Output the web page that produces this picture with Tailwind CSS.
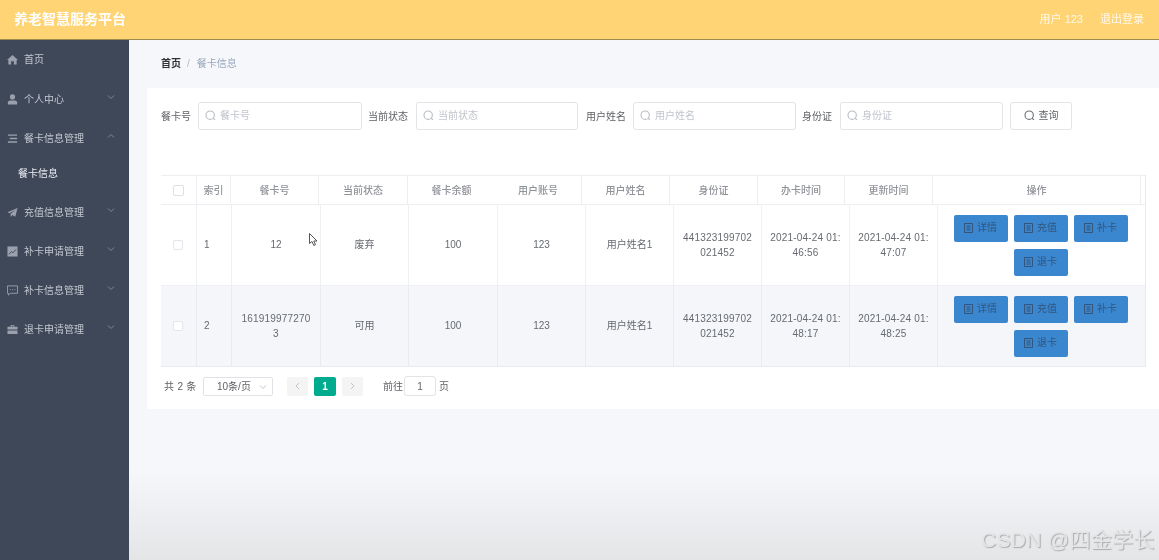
<!DOCTYPE html>
<html lang="zh">
<head>
  <meta charset="UTF-8">
  <title>养老智慧服务平台</title>
  <script src="https://cdn.jsdelivr.net/npm/@tailwindcss/browser@4"></script>
</head>
<body class="overflow-hidden">
<div class="relative w-[1159px] h-[560px] overflow-hidden bg-[#f5f7fa] text-[10px] text-[#666a70] font-['Liberation_Sans','Noto_Sans_CJK_SC',sans-serif] blur-[0.45px]">

  <!-- top bar -->
  <header class="h-[40px] bg-[#ffd475] border-b border-[#a08a50] flex items-center justify-between pl-[14px] pr-[15px] text-white">
    <div class="text-[14px] font-bold">养老智慧服务平台</div>
    <div class="flex gap-[17px] text-[11px] text-white/85">
      <span>用户 123</span>
      <span>退出登录</span>
    </div>
  </header>

  <div class="flex h-[520px]">
    <!-- sidebar -->
    <aside class="w-[129px] shrink-0 bg-[#3f4859] text-[#c3c8d0]">
      <div class="h-[39px] flex items-center pl-[7px] gap-[6px]">
        <svg class="w-[11px] h-[11px]" viewBox="0 0 12 12" fill="#9aa1ac"><path d="M6 1 L12 6.5 H10.5 V11.5 H7.5 V8 H4.5 V11.5 H1.5 V6.5 H0 Z"/></svg>
        <span>首页</span>
      </div>
      <div class="mt-px h-[39px] flex items-center pl-[7px] gap-[6px] relative">
        <svg class="w-[11px] h-[11px]" viewBox="0 0 12 12" fill="#9aa1ac"><circle cx="6" cy="3.2" r="2.8"/><path d="M1 11.5 V9 Q1 7 3.5 7 H8.5 Q11 7 11 9 V11.5 Z"/></svg>
        <span>个人中心</span>
        <svg class="absolute left-[107px] top-[14px] w-[8px] h-[6px]" viewBox="0 0 8 6" fill="none" stroke="#7f8794"><path d="M1 1.5 L4 4.5 L7 1.5"/></svg>
      </div>
      <div class="h-[39px] flex items-center pl-[7px] gap-[6px] relative">
        <svg class="w-[11px] h-[11px]" viewBox="0 0 12 12" fill="#9aa1ac"><path d="M1 1.5 H11 V2.9 H1 Z M3 5.3 H11 V6.7 H3 Z M1 9.1 H11 V10.5 H1 Z"/></svg>
        <span>餐卡信息管理</span>
        <svg class="absolute left-[107px] top-[14px] w-[8px] h-[6px]" viewBox="0 0 8 6" fill="none" stroke="#7f8794"><path d="M1 4.5 L4 1.5 L7 4.5"/></svg>
      </div>
      <div class="h-[35px] pb-[4px] flex items-center pl-[18px] text-[#eceef1]">餐卡信息</div>
      <div class="h-[39px] flex items-center pl-[7px] gap-[6px] relative">
        <svg class="w-[11px] h-[11px]" viewBox="0 0 12 12" fill="#9aa1ac"><path d="M11.5 1 L9 10.5 L5.8 8.6 L4.2 10.8 L3.8 7.6 L9.5 3 L2.8 6.8 L0.5 5.6 Z"/></svg>
        <span>充值信息管理</span>
        <svg class="absolute left-[107px] top-[14px] w-[8px] h-[6px]" viewBox="0 0 8 6" fill="none" stroke="#7f8794"><path d="M1 1.5 L4 4.5 L7 1.5"/></svg>
      </div>
      <div class="h-[39px] flex items-center pl-[7px] gap-[6px] relative">
        <svg class="w-[11px] h-[11px]" viewBox="0 0 12 12"><rect x="0.5" y="0.5" width="11" height="11" fill="#9aa1ac"/><path d="M2 9 L5 6 L6.5 7.5 L10 3.5" fill="none" stroke="#3f4859"/></svg>
        <span>补卡申请管理</span>
        <svg class="absolute left-[107px] top-[14px] w-[8px] h-[6px]" viewBox="0 0 8 6" fill="none" stroke="#7f8794"><path d="M1 1.5 L4 4.5 L7 1.5"/></svg>
      </div>
      <div class="h-[39px] flex items-center pl-[7px] gap-[6px] relative">
        <svg class="w-[11px] h-[11px]" viewBox="0 0 12 12" fill="none" stroke="#9aa1ac"><path d="M0.5 1 H11.5 V9 H4 L1.5 11 V9 H0.5 Z"/><path d="M3 5 H4 M5.5 5 H6.5 M8 5 H9"/></svg>
        <span>补卡信息管理</span>
        <svg class="absolute left-[107px] top-[14px] w-[8px] h-[6px]" viewBox="0 0 8 6" fill="none" stroke="#7f8794"><path d="M1 1.5 L4 4.5 L7 1.5"/></svg>
      </div>
      <div class="h-[39px] flex items-center pl-[7px] gap-[6px] relative">
        <svg class="w-[11px] h-[11px]" viewBox="0 0 12 12" fill="#9aa1ac"><path d="M4 1 H8 V3 H11.5 V6 H0.5 V3 H4 Z M5 2 V3 H7 V2 Z M0.5 7 H11.5 V11 H0.5 Z"/></svg>
        <span>退卡申请管理</span>
        <svg class="absolute left-[107px] top-[14px] w-[8px] h-[6px]" viewBox="0 0 8 6" fill="none" stroke="#7f8794"><path d="M1 1.5 L4 4.5 L7 1.5"/></svg>
      </div>
    </aside>

    <!-- main -->
    <main class="flex-1 pl-[18px]">
      <!-- breadcrumb -->
      <div class="h-[48px] flex items-center pl-[14px] pb-[1px]">
        <span class="text-[#303133] font-bold">首页</span>
        <span class="text-[#b4bcc8] ml-[6px] mr-[7px]">/</span>
        <span class="text-[#97a8be]">餐卡信息</span>
      </div>

      <section class="bg-white h-[321px] pl-[14px] pt-[14px]">
        <!-- search -->
        <div class="flex items-center h-[28px] text-[#606266]">
          <span class="w-[37px]">餐卡号</span>
          <div class="w-[164px] h-[28px] pb-px border border-[#e2e4e8] rounded-[3px] flex items-center pl-[6px] gap-[4px] text-[#c0c4cc]">
            <svg class="w-[11px] h-[11px]" viewBox="0 0 10 10" fill="none" stroke="#b9bdc5"><circle cx="4.7" cy="4.7" r="3.8"/><path d="M7.5 7.5 L9 9"/></svg>餐卡号
          </div>
          <span class="w-[48px] pl-[6px] shrink-0">当前状态</span>
          <div class="w-[162px] ml-[6px] h-[28px] pb-px border border-[#e2e4e8] rounded-[3px] flex items-center pl-[6px] gap-[4px] text-[#c0c4cc]">
            <svg class="w-[11px] h-[11px]" viewBox="0 0 10 10" fill="none" stroke="#b9bdc5"><circle cx="4.7" cy="4.7" r="3.8"/><path d="M7.5 7.5 L9 9"/></svg>当前状态
          </div>
          <span class="ml-[8px] w-[47px] shrink-0">用户姓名</span>
          <div class="w-[163px] h-[28px] pb-px border border-[#e2e4e8] rounded-[3px] flex items-center pl-[6px] gap-[4px] text-[#c0c4cc]">
            <svg class="w-[11px] h-[11px]" viewBox="0 0 10 10" fill="none" stroke="#b9bdc5"><circle cx="4.7" cy="4.7" r="3.8"/><path d="M7.5 7.5 L9 9"/></svg>用户姓名
          </div>
          <span class="ml-[6px] w-[38px] shrink-0">身份证</span>
          <div class="w-[163px] h-[28px] pb-px border border-[#e2e4e8] rounded-[3px] flex items-center pl-[6px] gap-[4px] text-[#c0c4cc]">
            <svg class="w-[11px] h-[11px]" viewBox="0 0 10 10" fill="none" stroke="#b9bdc5"><circle cx="4.7" cy="4.7" r="3.8"/><path d="M7.5 7.5 L9 9"/></svg>身份证
          </div>
          <button class="ml-[7px] w-[62px] h-[28px] pb-px border border-[#e2e4e8] rounded-[3px] flex items-center justify-center gap-[4px] text-[#606266] bg-white">
            <svg class="w-[11px] h-[11px]" viewBox="0 0 10 10" fill="none" stroke="#6a6f76"><circle cx="4.7" cy="4.7" r="3.8"/><path d="M7.5 7.5 L9 9"/></svg>查询
          </button>
        </div>

        <!-- table -->
        <div class="mt-[45px] w-[985px] border-b border-[#e8eaee] border-r border-r-[#e8eaee]">
          <div class="h-[30px] border-t border-b border-[#eceef2] flex text-[#909399] font-medium">
            <div class="w-[36px] border-r border-[#eceef2] flex items-center justify-center"><span class="block w-[11px] h-[11px] border border-[#dcdfe6] rounded-[2px] bg-white"></span></div>
            <div class="w-[34px] border-r border-[#eceef2] flex items-center justify-center">索引</div>
            <div class="w-[88px] border-r border-[#eceef2] flex items-center justify-center">餐卡号</div>
            <div class="w-[89px] border-r border-[#eceef2] flex items-center justify-center">当前状态</div>
            <div class="w-[87px] flex items-center justify-center">餐卡余额</div>
            <div class="w-[87px] border-r border-[#eceef2] flex items-center justify-center">用户账号</div>
            <div class="w-[88px] border-r border-[#eceef2] flex items-center justify-center">用户姓名</div>
            <div class="w-[88px] border-r border-[#eceef2] flex items-center justify-center">身份证</div>
            <div class="w-[87px] border-r border-[#eceef2] flex items-center justify-center">办卡时间</div>
            <div class="w-[88px] border-r border-[#eceef2] flex items-center justify-center">更新时间</div>
            <div class="w-[208px] border-r border-[#eceef2] flex items-center justify-center">操作</div>
          </div>

          <div class="h-[81px] flex border-b border-[#eef0f4] bg-white text-center leading-[15.5px]">
            <div class="w-[36px] border-r border-[#eef0f4] flex items-center justify-center pr-[2px]"><span class="block w-[10px] h-[10px] border border-[#e4e6eb] rounded-[2px] bg-white"></span></div>
            <div class="w-[35px] border-r border-[#eef0f4] flex items-center pl-[7px]">1</div>
            <div class="w-[89px] border-r border-[#eef0f4] flex items-center justify-center">12</div>
            <div class="w-[88px] border-r border-[#eef0f4] flex items-center justify-center">废弃</div>
            <div class="w-[89px] border-r border-[#eef0f4] flex items-center justify-center">100</div>
            <div class="w-[88px] border-r border-[#eef0f4] flex items-center justify-center">123</div>
            <div class="w-[88px] border-r border-[#eef0f4] flex items-center justify-center">用户姓名1</div>
            <div class="w-[88px] border-r border-[#eef0f4] flex items-center justify-center tracking-[0.2px]">441323199702<br>021452</div>
            <div class="w-[88px] border-r border-[#eef0f4] flex items-center justify-center tracking-[0.2px]">2021-04-24 01:<br>46:56</div>
            <div class="w-[88px] border-r border-[#eef0f4] flex items-center justify-center tracking-[0.2px]">2021-04-24 01:<br>47:07</div>
            <div class="flex-1 flex flex-wrap content-center justify-center gap-x-[6px] gap-y-[7px] pl-[15px] pr-[17px]">
              <button class="w-[54px] h-[27px] bg-[#3a87cf] rounded-[2px] flex items-center justify-center gap-[4px] text-[#33557c]"><svg class="w-[9px] h-[10px]" viewBox="0 0 9 10" fill="none" stroke="#33557c"><path d="M0.5 0.5 H8.5 V9.5 H0.5 Z M2.5 3 H6.5 M2.5 5 H6.5 M2.5 7 H6.5"/></svg>详情</button>
              <button class="w-[54px] h-[27px] bg-[#3a87cf] rounded-[2px] flex items-center justify-center gap-[4px] text-[#33557c]"><svg class="w-[9px] h-[10px]" viewBox="0 0 9 10" fill="none" stroke="#33557c"><path d="M0.5 0.5 H8.5 V9.5 H0.5 Z M2.5 3 H6.5 M2.5 5 H6.5 M2.5 7 H6.5"/></svg>充值</button>
              <button class="w-[54px] h-[27px] bg-[#3a87cf] rounded-[2px] flex items-center justify-center gap-[4px] text-[#33557c]"><svg class="w-[9px] h-[10px]" viewBox="0 0 9 10" fill="none" stroke="#33557c"><path d="M0.5 0.5 H8.5 V9.5 H0.5 Z M2.5 3 H6.5 M2.5 5 H6.5 M2.5 7 H6.5"/></svg>补卡</button>
              <button class="w-[54px] h-[27px] bg-[#3a87cf] rounded-[2px] flex items-center justify-center gap-[4px] text-[#33557c]"><svg class="w-[9px] h-[10px]" viewBox="0 0 9 10" fill="none" stroke="#33557c"><path d="M0.5 0.5 H8.5 V9.5 H0.5 Z M2.5 3 H6.5 M2.5 5 H6.5 M2.5 7 H6.5"/></svg>退卡</button>
            </div>
          </div>

          <div class="h-[80px] flex bg-[#f4f6fa] text-center leading-[15.5px]">
            <div class="w-[36px] border-r border-[#e9ebf0] flex items-center justify-center pr-[2px]"><span class="block w-[10px] h-[10px] border border-[#e4e6eb] rounded-[2px] bg-white"></span></div>
            <div class="w-[35px] border-r border-[#e9ebf0] flex items-center pl-[7px]">2</div>
            <div class="w-[89px] border-r border-[#e9ebf0] flex items-center justify-center tracking-[0.2px]">161919977270<br>3</div>
            <div class="w-[88px] border-r border-[#e9ebf0] flex items-center justify-center">可用</div>
            <div class="w-[89px] border-r border-[#e9ebf0] flex items-center justify-center">100</div>
            <div class="w-[88px] border-r border-[#e9ebf0] flex items-center justify-center">123</div>
            <div class="w-[88px] border-r border-[#e9ebf0] flex items-center justify-center">用户姓名1</div>
            <div class="w-[88px] border-r border-[#e9ebf0] flex items-center justify-center tracking-[0.2px]">441323199702<br>021452</div>
            <div class="w-[88px] border-r border-[#e9ebf0] flex items-center justify-center tracking-[0.2px]">2021-04-24 01:<br>48:17</div>
            <div class="w-[88px] border-r border-[#e9ebf0] flex items-center justify-center tracking-[0.2px]">2021-04-24 01:<br>48:25</div>
            <div class="flex-1 flex flex-wrap content-center justify-center gap-x-[6px] gap-y-[7px] pl-[15px] pr-[17px]">
              <button class="w-[54px] h-[27px] bg-[#3a87cf] rounded-[2px] flex items-center justify-center gap-[4px] text-[#33557c]"><svg class="w-[9px] h-[10px]" viewBox="0 0 9 10" fill="none" stroke="#33557c"><path d="M0.5 0.5 H8.5 V9.5 H0.5 Z M2.5 3 H6.5 M2.5 5 H6.5 M2.5 7 H6.5"/></svg>详情</button>
              <button class="w-[54px] h-[27px] bg-[#3a87cf] rounded-[2px] flex items-center justify-center gap-[4px] text-[#33557c]"><svg class="w-[9px] h-[10px]" viewBox="0 0 9 10" fill="none" stroke="#33557c"><path d="M0.5 0.5 H8.5 V9.5 H0.5 Z M2.5 3 H6.5 M2.5 5 H6.5 M2.5 7 H6.5"/></svg>充值</button>
              <button class="w-[54px] h-[27px] bg-[#3a87cf] rounded-[2px] flex items-center justify-center gap-[4px] text-[#33557c]"><svg class="w-[9px] h-[10px]" viewBox="0 0 9 10" fill="none" stroke="#33557c"><path d="M0.5 0.5 H8.5 V9.5 H0.5 Z M2.5 3 H6.5 M2.5 5 H6.5 M2.5 7 H6.5"/></svg>补卡</button>
              <button class="w-[54px] h-[27px] bg-[#3a87cf] rounded-[2px] flex items-center justify-center gap-[4px] text-[#33557c]"><svg class="w-[9px] h-[10px]" viewBox="0 0 9 10" fill="none" stroke="#33557c"><path d="M0.5 0.5 H8.5 V9.5 H0.5 Z M2.5 3 H6.5 M2.5 5 H6.5 M2.5 7 H6.5"/></svg>退卡</button>
            </div>
          </div>
        </div>

        <!-- pagination -->
        <div class="mt-[9px] h-[20px] flex items-center pl-[3px] text-[#606266]">
          <span class="w-[39px] tracking-[0.3px]">共 2 条</span>
          <div class="w-[70px] h-[19px] border border-[#dfe2e7] rounded-[2px] flex items-center pl-[13px] relative">10条/页
            <svg class="absolute right-[5px] top-[6px] w-[8px] h-[6px]" viewBox="0 0 8 6" fill="none" stroke="#c0c4cc"><path d="M1 1.5 L4 4.5 L7 1.5"/></svg>
          </div>
          <div class="ml-[14px] w-[21px] h-[19px] rounded-[2px] bg-[#f4f4f5] flex items-center justify-center">
            <svg class="w-[5px] h-[8px]" viewBox="0 0 5 8" fill="none" stroke="#c0c4cc"><path d="M4 1 L1 4 L4 7"/></svg>
          </div>
          <div class="ml-[6px] w-[22px] h-[19px] rounded-[2px] bg-[#00ab8e] text-white font-bold flex items-center justify-center">1</div>
          <div class="ml-[6px] w-[21px] h-[19px] rounded-[2px] bg-[#f4f4f5] flex items-center justify-center">
            <svg class="w-[5px] h-[8px]" viewBox="0 0 5 8" fill="none" stroke="#c0c4cc"><path d="M1 1 L4 4 L1 7"/></svg>
          </div>
          <span class="ml-[20px]">前往</span>
          <div class="ml-[1px] w-[32px] h-[20px] border border-[#e2e4e8] rounded-[3px] flex items-center justify-center">1</div>
          <span class="ml-[3px]">页</span>
        </div>
      </section>
    </main>
  </div>

  <!-- fade at the bottom of the content area -->
  <div class="absolute left-[129px] right-0 bottom-0 h-[90px] bg-gradient-to-b from-[#f5f7fa]/0 to-[#e4e5e7]"></div>

  <!-- mouse pointer -->
  <svg class="absolute left-[309px] top-[233px] w-[9px] h-[14px]" viewBox="0 0 9 14" fill="#fff" stroke="#555"><path d="M0.5 0.5 V10.5 L3 8.5 L4.8 12.5 L6.5 11.8 L4.8 8 H8 Z"/></svg>

  <!-- watermark -->
  <div class="absolute left-[981px] top-[526px] text-[21px] leading-[28px] tracking-[0.3px] text-[#e4e5e7] [text-shadow:1px_1px_1px_#a9aaac] whitespace-nowrap">CSDN @四金学长</div>
</div>
</body>
</html>
